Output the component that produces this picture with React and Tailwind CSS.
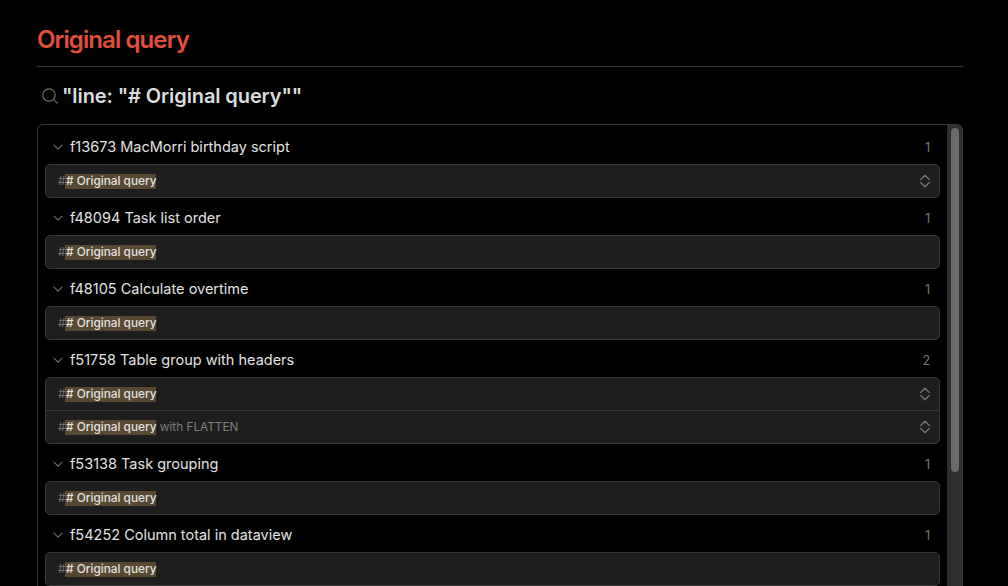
import React from 'react';

const results = [
  { title: 'f13673 MacMorri birthday script', count: 1, lines: [{ expand: true }] },
  { title: 'f48094 Task list order', count: 1, lines: [{}] },
  { title: 'f48105 Calculate overtime', count: 1, lines: [{}] },
  {
    title: 'f51758 Table group with headers',
    count: 2,
    lines: [{ expand: true }, { expand: true, rest: ' with FLATTEN' }],
  },
  { title: 'f53138 Task grouping', count: 1, lines: [{}] },
  { title: 'f54252 Column total in dataview', count: 1, lines: [{}] },
];

const SearchIcon = () => (
  <svg width="18" height="18" viewBox="0 0 18 18" fill="none" stroke="#6f6f6f" strokeWidth="1.2" strokeLinecap="round">
    <circle cx="8" cy="8" r="6.2" />
    <path d="M12.6 12.6 16.2 16.2" />
  </svg>
);

const Chevron = () => (
  <svg width="12" height="12" viewBox="0 0 12 12" fill="none" stroke="#6b6b6b" strokeWidth="1.2" strokeLinecap="round" strokeLinejoin="round">
    <path d="M2 4.2 6 8.2 10 4.2" />
  </svg>
);

const ExpandIcon = () => (
  <svg width="14" height="14" viewBox="0 0 14 14" fill="none" stroke="#7a7a7a" strokeWidth="1.3" strokeLinecap="round" strokeLinejoin="round">
    <path d="M2.6 5.6 7 1.2 11.4 5.6" />
    <path d="M2.6 8.4 7 12.8 11.4 8.4" />
  </svg>
);

const Line = ({ line, divided }) => (
  <div className={`flex items-center justify-between pl-[12px] pr-[7px] text-[11.8px] ${divided ? 'h-[33px] border-t border-[#383838]' : 'h-[32px]'}`}>
    <div className="leading-[16px] whitespace-pre">
      <span className="text-[#777777]">#</span>
      <span className="inline-block h-[15px] bg-[#57482f] pl-[0.5px] font-medium leading-[15px] text-[#e2e2e2]"># Original query</span>
      {line.rest && <span className="text-[#7f7f7f]">{line.rest}</span>}
    </div>
    {line.expand && <ExpandIcon />}
  </div>
);

const Result = ({ item }) => (
  <div>
    <div className="flex h-[37px] items-center justify-between pl-[7px] pr-[10px] pt-[2px]">
      <div className="flex items-center gap-[6px]">
        <Chevron />
        <span className="text-[14.5px] font-[430] text-[#e2e2e2]">{item.title}</span>
      </div>
      <span className="mt-[4px] text-[12.5px] text-[#7a7a7a]">{item.count}</span>
    </div>
    <div className="rounded-[5px] border border-[#363636] bg-[#1e1e1e]">
      {item.lines.map((line, i) => (
        <Line key={i} line={line} divided={i > 0} />
      ))}
    </div>
  </div>
);

export default function App() {
  return (
    <div className="h-[586px] overflow-hidden bg-black px-[37px] font-['Inter',sans-serif] antialiased">
      <div className="w-[926px]">
        <h1 className="flex h-[67px] items-center border-b border-[#363636] pt-[13px] text-[24px] font-semibold tracking-[-0.9px] text-[#e0503a]">
          Original query
        </h1>
        <div className="flex h-[57px] items-center gap-[3px] pl-[4px]">
          <SearchIcon />
          <span className="text-[20px] font-semibold tracking-[-0.1px] text-[#dcddde]">"line: "# Original query""</span>
        </div>
        <div className="flex h-[520px] overflow-hidden rounded-t-[6px] border border-[#363636] border-b-0">
          <div className="flex-1 pl-[7px] pr-[7px] pt-[2px]">
            {results.map((item) => (
              <Result key={item.title} item={item} />
            ))}
          </div>
          <div className="w-[15px] shrink-0 border-l border-[#2a2a2a] bg-[#2f2f2f] px-[3px] pt-[3px]">
            <div className="h-[344px] rounded-[4px] bg-[#6b6b6b]" />
          </div>
        </div>
      </div>
    </div>
  );
}
